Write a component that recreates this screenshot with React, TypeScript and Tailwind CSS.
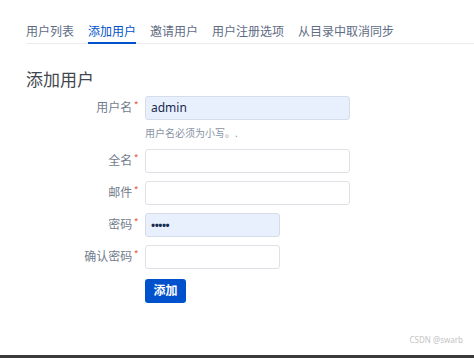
import React from 'react';

const font = { fontFamily: '"Noto Sans", "Noto Sans CJK SC", sans-serif' };

const tabs = ['用户列表', '添加用户', '邀请用户', '用户注册选项', '从目录中取消同步'];

const Label: React.FC<{ text: string }> = ({ text }) => (
  <div className="flex h-[24px] items-center justify-end pr-[2px] text-[12px] leading-[16px] text-[#737d8c]">
    <span>{text}</span>
    <span className="ml-[2px] -mt-[9px] text-[7px] leading-[7px] text-[#de350b]">*</span>
  </div>
);

const Field: React.FC<{ value?: string; width: string; filled?: boolean; secret?: boolean }> = ({
  value,
  width,
  filled,
  secret,
}) => (
  <div
    className={`flex h-[24px] items-center rounded-[3px] border px-[5px] ${width} ${
      filled ? 'border-[#d6dce8] bg-[#e8f0fe]' : 'border-[#dfe1e6] bg-white'
    }`}
  >
    {secret ? (
      <span className="text-[11px] font-bold leading-[10px] tracking-[-0.5px] text-[#172b4d]">•••••</span>
    ) : (
      <span className="text-[12px] leading-[16px] text-[#172b4d]">{value}</span>
    )}
  </div>
);

export default function App() {
  return (
    <div className="flex h-[358px] flex-col bg-white" style={font}>
      <div className="pl-[26px] pt-[24px]">
        <div className="flex gap-[14px] border-b border-[#ebecf0]">
          {tabs.map((t, i) => (
            <div
              key={t}
              className={`-mb-px border-b-2 pb-[2px] text-[12px] leading-[16px] ${
                i === 1 ? 'border-[#0052cc] text-[#0052cc]' : 'border-transparent text-[#5e6c84]'
              }`}
            >
              {t}
            </div>
          ))}
        </div>

        <h1 className="mt-[24px] text-[17px] font-normal leading-[24px] text-[#42474f]">添加用户</h1>

        <div className="mt-[4px] grid grid-cols-[114px_1fr] gap-x-[5px] gap-y-[8px]">
          <Label text="用户名" />
          <div>
            <Field value="admin" width="w-[205px]" filled />
            <div className="mt-[6px] text-[10px] leading-[15px] text-[#8993a4]">用户名必须为小写。.</div>
          </div>

          <Label text="全名" />
          <Field width="w-[205px]" />

          <Label text="邮件" />
          <Field width="w-[205px]" />

          <Label text="密码" />
          <Field width="w-[135px]" filled secret />

          <Label text="确认密码" />
          <Field width="w-[135px]" />

          <div />
          <div>
            <button className="h-[24px] w-[41px] rounded-[3px] bg-[#0052cc] text-[12px] font-bold leading-[16px] text-white">
              添加
            </button>
          </div>
        </div>
      </div>

      <div className="flex-1" />
      <div className="flex justify-end pb-[10px] pr-[11px] text-[8px] leading-[10px] text-[#c4c4c4]">
        CSDN @swarb
      </div>
      <div className="h-[3px] bg-[#3a3a3a]" />
    </div>
  );
}
